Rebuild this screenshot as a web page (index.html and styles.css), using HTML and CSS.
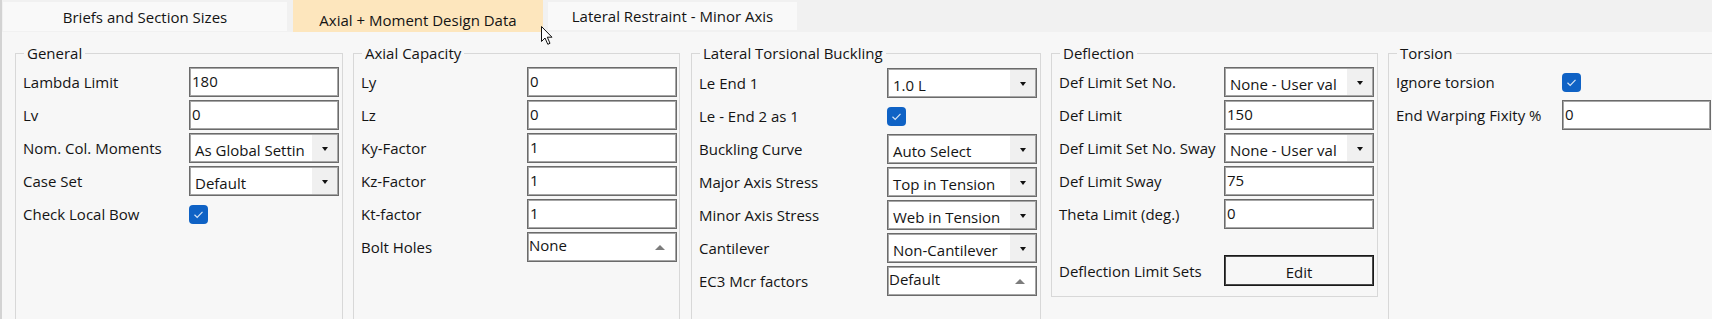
FILE: index.html
```html
<!DOCTYPE html>
<html>
<head>
<meta charset="utf-8">
<link rel="stylesheet" href="styles.css">
</head>
<body>
<div class="app">
  <div class="tabs">
    <div class="tab tab-first">Briefs and Section Sizes</div>
    <div class="tab tab-active">Axial + Moment Design Data</div>
    <div class="tab tab-last">Lateral Restraint - Minor Axis</div>
  </div>
  <div class="content">
    <fieldset class="group g-general">
      <legend>General</legend>
      <div class="rows">
        <div class="row"><span class="lbl">Lambda Limit</span><span class="tb">180</span></div>
        <div class="row"><span class="lbl">Lv</span><span class="tb">0</span></div>
        <div class="row"><span class="lbl">Nom. Col. Moments</span><span class="cb"><span class="cb-text">As Global Settin</span><span class="cb-btn"><i class="down"></i></span></span></div>
        <div class="row"><span class="lbl">Case Set</span><span class="cb"><span class="cb-text">Default</span><span class="cb-btn"><i class="down"></i></span></span></div>
        <div class="row"><span class="lbl">Check Local Bow</span><span class="chk"><svg width="19" height="19" viewBox="0 0 19 19"><polyline points="5.5,9.8 8.2,12.4 13.5,6.8" fill="none" stroke="#d6e4f5" stroke-width="1.2"/></svg></span></div>
      </div>
    </fieldset>
    <fieldset class="group g-axial">
      <legend>Axial Capacity</legend>
      <div class="rows">
        <div class="row"><span class="lbl">Ly</span><span class="tb">0</span></div>
        <div class="row"><span class="lbl">Lz</span><span class="tb">0</span></div>
        <div class="row"><span class="lbl">Ky-Factor</span><span class="tb">1</span></div>
        <div class="row"><span class="lbl">Kz-Factor</span><span class="tb">1</span></div>
        <div class="row"><span class="lbl">Kt-factor</span><span class="tb">1</span></div>
        <div class="row"><span class="lbl">Bolt Holes</span><span class="ub"><span class="ub-text">None</span><i class="up"></i></span></div>
      </div>
    </fieldset>
    <fieldset class="group g-ltb">
      <legend>Lateral Torsional Buckling</legend>
      <div class="rows">
        <div class="row"><span class="lbl">Le End 1</span><span class="cb"><span class="cb-text">1.0 L</span><span class="cb-btn"><i class="down"></i></span></span></div>
        <div class="row"><span class="lbl">Le - End 2 as 1</span><span class="chk"><svg width="19" height="19" viewBox="0 0 19 19"><polyline points="5.5,9.8 8.2,12.4 13.5,6.8" fill="none" stroke="#d6e4f5" stroke-width="1.2"/></svg></span></div>
        <div class="row"><span class="lbl">Buckling Curve</span><span class="cb"><span class="cb-text">Auto Select</span><span class="cb-btn"><i class="down"></i></span></span></div>
        <div class="row"><span class="lbl">Major Axis Stress</span><span class="cb"><span class="cb-text">Top in Tension</span><span class="cb-btn"><i class="down"></i></span></span></div>
        <div class="row"><span class="lbl">Minor Axis Stress</span><span class="cb"><span class="cb-text">Web in Tension</span><span class="cb-btn"><i class="down"></i></span></span></div>
        <div class="row"><span class="lbl">Cantilever</span><span class="cb"><span class="cb-text">Non-Cantilever</span><span class="cb-btn"><i class="down"></i></span></span></div>
        <div class="row"><span class="lbl">EC3 Mcr factors</span><span class="ub"><span class="ub-text">Default</span><i class="up"></i></span></div>
      </div>
    </fieldset>
    <fieldset class="group g-defl">
      <legend>Deflection</legend>
      <div class="rows">
        <div class="row"><span class="lbl">Def Limit Set No.</span><span class="cb"><span class="cb-text">None - User val</span><span class="cb-btn"><i class="down"></i></span></span></div>
        <div class="row"><span class="lbl">Def Limit</span><span class="tb">150</span></div>
        <div class="row"><span class="lbl">Def Limit Set No. Sway</span><span class="cb"><span class="cb-text">None - User val</span><span class="cb-btn"><i class="down"></i></span></span></div>
        <div class="row"><span class="lbl">Def Limit Sway</span><span class="tb">75</span></div>
        <div class="row"><span class="lbl">Theta Limit (deg.)</span><span class="tb">0</span></div>
        <div class="row row-btn"><span class="lbl">Deflection Limit Sets</span><span class="btn">Edit</span></div>
      </div>
    </fieldset>
    <fieldset class="group g-torsion">
      <legend>Torsion</legend>
      <div class="rows">
        <div class="row"><span class="lbl">Ignore torsion</span><span class="chk"><svg width="19" height="19" viewBox="0 0 19 19"><polyline points="5.5,9.8 8.2,12.4 13.5,6.8" fill="none" stroke="#d6e4f5" stroke-width="1.2"/></svg></span></div>
        <div class="row"><span class="lbl">End Warping Fixity %</span><span class="tb">0</span></div>
      </div>
    </fieldset>
  </div>
  <svg class="cursor" width="13" height="20" viewBox="0 0 13 20"><path d="M0.5,0.5 L0.5,15.5 L4,12 L6.8,18.3 L9,17.3 L6.3,11.2 L11,11.2 Z" fill="#fff" stroke="#111" stroke-width="1" stroke-linejoin="miter"/></svg>
</div>
</body>
</html>
```
FILE: styles.css
```css
html, body {
  margin: 0;
  padding: 0;
}
body {
  width: 1712px;
  height: 319px;
  overflow: hidden;
  background: #f7f7f7;
  font-family: "Open Sans", "Noto Sans", sans-serif;
  font-size: 15px;
  color: #141414;
}
.app {
  position: relative;
  height: 319px;
  box-sizing: border-box;
  border-left: 2px solid #d3d3d3;
}
.tabs {
  display: flex;
  align-items: flex-start;
  height: 32px;
  background: #f1f1f1;
}
.tab {
  display: flex;
  justify-content: center;
  box-sizing: border-box;
  line-height: 20px;
  background: #f9f9f9;
}
.tab-first {
  margin-left: 1px;
  margin-top: 2px;
  width: 284px;
  height: 29px;
  padding-top: 5px;
}
.tab-active {
  margin-left: 6px;
  width: 250px;
  height: 32px;
  padding-top: 10px;
  background: #fde6bd;
}
.tab-last {
  margin-left: 5px;
  margin-top: 2px;
  width: 249px;
  height: 28px;
  padding-top: 4px;
}
.content {
  display: flex;
  align-items: flex-start;
  padding: 11px 0 0 13px;
}
.group {
  margin: 0;
  min-width: 0;
  box-sizing: border-box;
  padding: 4px 0 0 7px;
  border: 1px solid #d8d8d8;
  height: 300px;
  flex: none;
}
.group legend {
  padding: 0 3px;
  margin-left: 1px;
  line-height: 20px;
}
.g-general { width: 328px; --lw: 166px; }
.g-axial { width: 327px; margin-left: 10px; --lw: 166px; }
.g-ltb { width: 350px; margin-left: 11px; --lw: 188px; padding-top: 5px; }
.g-defl { width: 327px; margin-left: 10px; --lw: 165px; height: 254px; }
.g-torsion { width: 400px; margin-left: 10px; --lw: 166px; }
.rows {
  display: flex;
  flex-direction: column;
  gap: 3px;
}
.row {
  display: flex;
  align-items: center;
  height: 30px;
}
.row-btn {
  margin-top: 23px;
  height: 31px;
}
.lbl {
  width: var(--lw);
  flex: none;
  white-space: nowrap;
  line-height: 20px;
}
.tb, .cb, .ub {
  position: relative;
  display: flex;
  width: 150px;
  height: 30px;
  box-sizing: border-box;
  background: #fff;
  border: 1px solid #6b6b6b;
  box-shadow: inset 0 0 0 1px #a6a6a6;
  line-height: 20px;
  white-space: nowrap;
  overflow: hidden;
}
.g-torsion .tb { width: 149px; }
.tb {
  padding: 3px 0 0 2px;
}
.cb-text {
  flex: 1;
  padding: 6px 0 0 5px;
  overflow: hidden;
}
.cb-btn {
  flex: none;
  width: 25px;
  margin: 1px 1px 1px 0;
  background: #f0f0f0;
  display: flex;
  align-items: center;
  justify-content: center;
  padding-top: 2px;
  box-sizing: border-box;
}
.down {
  width: 0;
  height: 0;
  border-left: 3.5px solid transparent;
  border-right: 3.5px solid transparent;
  border-top: 4px solid #111;
}
.ub {
  align-items: flex-start;
}
.ub-text {
  flex: 1;
  padding: 2px 0 0 1px;
}
.up {
  align-self: center;
  margin-right: 11px;
  width: 0;
  height: 0;
  border-left: 5px solid transparent;
  border-right: 5px solid transparent;
  border-bottom: 5px solid #7c7c7c;
}
.chk {
  width: 19px;
  height: 19px;
  border-radius: 4px;
  background: #0f62c5;
  display: flex;
}
.btn {
  width: 150px;
  height: 31px;
  box-sizing: border-box;
  border: 1px solid #1a1a1a;
  box-shadow: inset 0 0 0 1px #4a4a4a;
  background: #f7f7f7;
  display: flex;
  align-items: center;
  justify-content: center;
  line-height: 20px;
  padding-top: 2px;
}
.cursor {
  position: absolute;
  left: 539px;
  top: 26px;
}
```
